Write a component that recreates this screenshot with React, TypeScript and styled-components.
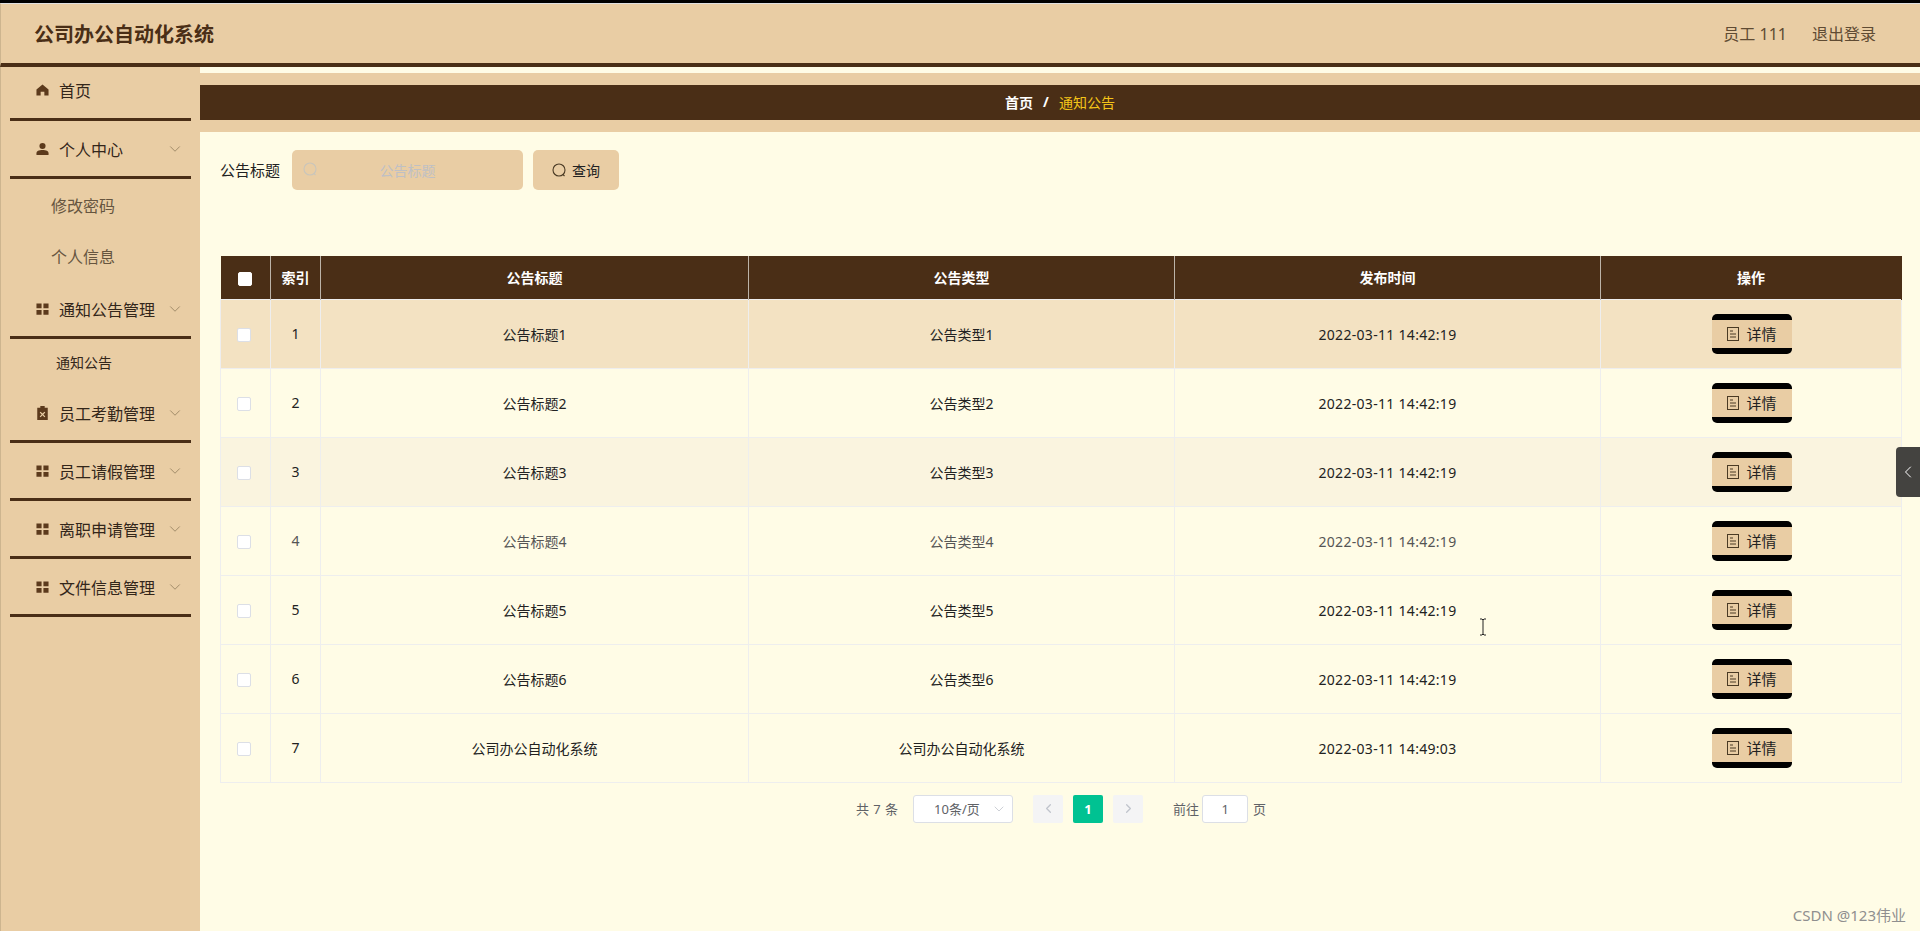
import { ChevronDown, ChevronLeft, ChevronRight } from "lucide-react";
import styled, { createGlobalStyle } from "styled-components";

const tan = "#e9cda4";
const brown = "#4a2e16";
const cream = "#fffce6";

const GlobalStyle = createGlobalStyle`
    html, body {
        margin: 0;
        padding: 0;
        background: ${cream};
        font-family: "Noto Sans", "Noto Sans CJK SC", sans-serif;
    }
    * { box-sizing: border-box; }
`;

const Page = styled.div`
    position: relative;
    height: 931px;
    overflow: hidden;
    display: flex;
    flex-direction: column;
    background: ${cream};
    border-top: 3px solid #000;
`;
const Header = styled.header`
    flex: none;
    height: 64px;
    display: flex;
    align-items: center;
    justify-content: space-between;
    padding: 0 44px 1px 33px;
    background: ${tan};
    border-top: 1px solid #e0e0e0;
    border-left: 1px solid #cdb58f;
    border-bottom: 4px solid ${brown};
`;
const Title = styled.div`
    font-size: 20px;
    font-weight: 700;
    color: ${brown};
`;
const UserBox = styled.div`
    display: flex;
    gap: 25px;
    font-size: 16px;
    color: #5f4b33;
`;
const Body = styled.div`
    flex: 1;
    display: flex;
    min-height: 0;
`;
const Sidebar = styled.aside`
    flex: none;
    width: 200px;
    background: ${tan};
    border-left: 1px solid #cdb58f;
`;
const MenuRow = styled.div<{ $first?: boolean }>`
    height: ${(p) => (p.$first ? 54 : 58)}px;
    margin: 0 9px;
    padding: 0 7px ${(p) => (p.$first ? 5 : 0)}px 26px;
    display: flex;
    align-items: center;
    gap: 10px;
    font-size: 16px;
    color: #33261a;
    white-space: nowrap;
    border-bottom: 3px solid ${brown};
    svg.lead {
        flex: none;
        width: 13px;
        height: 14px;
        fill: #5c3a1c;
    }
    span { flex: 1; }
`;
const SubRow = styled.div<{ $small?: boolean }>`
    height: ${(p) => (p.$small ? 46 : 51)}px;
    display: flex;
    align-items: center;
    padding-left: ${(p) => (p.$small ? 55 : 50)}px;
    font-size: ${(p) => (p.$small ? 14 : 16)}px;
    color: ${(p) => (p.$small ? "#33261a" : "#66553f")};
`;
const Main = styled.main`
    flex: 1;
    min-width: 0;
    padding-top: 6px;
`;
const CrumbBand = styled.div`
    padding: 12px 0;
    background: ${tan};
`;
const Crumbs = styled.div`
    height: 35px;
    display: flex;
    align-items: center;
    justify-content: center;
    gap: 10px;
    padding-bottom: 2px;
    background: ${brown};
    font-size: 14px;
    font-weight: 700;
    color: #fff;
`;
const CrumbCurrent = styled.span`
    color: #f5c518;
    font-weight: 400;
`;
const Content = styled.div`
    padding: 18px 19px 0 20px;
`;
const SearchBar = styled.div`
    display: flex;
    align-items: center;
    height: 40px;
    margin-bottom: 66px;
`;
const SearchLabel = styled.label`
    width: 72px;
    padding-bottom: 1px;
    font-size: 15px;
    color: #222;
`;
const SearchBox = styled.div`
    position: relative;
    width: 231px;
    height: 40px;
    display: flex;
    align-items: center;
    justify-content: center;
    background: ${tan};
    border-radius: 5px;
    font-size: 14px;
    color: #bfc0c4;
    svg {
        position: absolute;
        left: 11px;
        top: 12px;
    }
`;
const SearchButton = styled.button`
    width: 86px;
    height: 40px;
    margin-left: 10px;
    display: flex;
    align-items: center;
    justify-content: center;
    gap: 5px;
    background: ${tan};
    border: none;
    border-radius: 5px;
    font-family: inherit;
    font-size: 14px;
    color: #222;
`;
const Table = styled.table`
    width: 1681px;
    table-layout: fixed;
    border-collapse: collapse;
    font-size: 14px;
`;
const HeadCell = styled.th`
    height: 43px;
    padding: 0;
    background: ${brown};
    color: #fff;
    font-size: 14px;
    font-weight: 700;
    border-right: 1px solid #bcb3a8;
    &:last-child { border-right: 1px solid ${brown}; }
`;
const Row = styled.tr<{ $bg: string; $muted?: boolean }>`
    background: ${(p) => p.$bg};
    color: ${(p) => (p.$muted ? "#555" : "#222")};
`;
const Cell = styled.td`
    height: 69px;
    padding: 0;
    text-align: center;
    border: 1px solid #eeeeee;
`;
const TimeCell = styled(Cell)`
    padding-top: 1px;
    letter-spacing: 0.3px;
`;
const CheckBox = styled.span<{ $head?: boolean }>`
    display: inline-block;
    vertical-align: middle;
    width: 14px;
    height: 14px;
    margin-left: ${(p) => (p.$head ? 0 : -4)}px;
    background: #fff;
    border: 1px solid ${(p) => (p.$head ? "#fff" : "#dcdfe6")};
    border-radius: 2px;
`;
const DetailButton = styled.button`
    width: 80px;
    height: 40px;
    margin-left: 2px;
    display: inline-flex;
    align-items: center;
    justify-content: center;
    gap: 7px;
    vertical-align: middle;
    background: ${tan};
    border: none;
    border-top: 6px solid #000;
    border-bottom: 6px solid #000;
    border-radius: 5px;
    font-family: inherit;
    font-size: 15px;
    color: #222;
`;
const Pager = styled.div`
    display: flex;
    align-items: center;
    justify-content: center;
    margin-top: 12px;
    padding-left: 1px;
    height: 28px;
    font-size: 13px;
    word-spacing: 1px;
    color: #606266;
`;
const PageSize = styled.div`
    position: relative;
    width: 100px;
    height: 28px;
    margin: 0 20px 0 15px;
    padding-left: 20px;
    display: flex;
    align-items: center;
    background: #fff;
    border: 1px solid #dcdfe6;
    border-radius: 3px;
    svg {
        position: absolute;
        right: 5px;
        top: 5px;
        color: #c0c4cc;
    }
`;
const PageButton = styled.div<{ $active?: boolean }>`
    width: 30px;
    height: 28px;
    margin-right: 10px;
    display: flex;
    align-items: center;
    justify-content: center;
    background: ${(p) => (p.$active ? "#00c292" : "#f4f4f5")};
    color: ${(p) => (p.$active ? "#fff" : "#c0c4cc")};
    font-weight: 700;
    border-radius: 2px;
`;
const JumpBox = styled.div`
    width: 46px;
    height: 28px;
    margin: 0 5px 0 3px;
    display: flex;
    align-items: center;
    justify-content: center;
    background: #fff;
    border: 1px solid #dcdfe6;
    border-radius: 3px;
`;
const JumpLabel = styled.span`
    margin-left: 20px;
`;
const SideTab = styled.div`
    position: absolute;
    right: 0;
    top: 444px;
    width: 24px;
    height: 50px;
    display: flex;
    align-items: center;
    justify-content: center;
    background: #444340;
    border-radius: 4px 0 0 4px;
    color: #fff;
`;
const Watermark = styled.div`
    position: absolute;
    right: 14px;
    top: 901px;
    font-size: 15px;
    color: #8f8f8f;
`;
const TextCursor = styled.svg`
    position: absolute;
    left: 1478px;
    top: 615px;
`;

const HomeIcon = () => (
    <svg className="lead" viewBox="0 0 14 14">
        <path d="M7 1 L13.5 6.5 V13 H9 V9 H5 V13 H.5 V6.5 Z" />
    </svg>
);
const UserIcon = () => (
    <svg className="lead" viewBox="0 0 14 14">
        <circle cx="7" cy="3.8" r="3.3" />
        <path d="M.5 13.5 V11.5 C.5 9 3 8 7 8 S13.5 9 13.5 11.5 V13.5 Z" />
    </svg>
);
const GridIcon = () => (
    <svg className="lead" viewBox="0 0 14 14">
        <path d="M.5 1 H6 V6.3 H.5 Z M8 1 H13.5 V6.3 H8 Z M.5 8 H6 V13.3 H.5 Z M8 8 H13.5 V13.3 H8 Z" />
    </svg>
);
const ClipboardIcon = () => (
    <svg className="lead" viewBox="0 0 14 16">
        <path
            fillRule="evenodd"
            d="M4.5 0 H9.5 V2 H13 V16 H1 V2 H4.5 Z M4.8 6.5 L3.8 7.5 L6 9.7 L3.8 11.9 L4.8 12.9 L7 10.7 L9.2 12.9 L10.2 11.9 L8 9.7 L10.2 7.5 L9.2 6.5 L7 8.7 Z"
        />
    </svg>
);
const SearchIcon = ({ color }: { color: string }) => (
    <svg width="15" height="15" viewBox="0 0 15 15" fill="none" stroke={color} strokeWidth="1.1">
        <circle cx="7" cy="7" r="6" />
        <path d="M11 11.5 L12.5 13" />
    </svg>
);
const TicketIcon = () => (
    <svg width="12" height="14" viewBox="0 0 12 14" fill="none" stroke="#4a3a24" strokeWidth="1">
        <rect x=".5" y=".5" width="11" height="13" />
        <path d="M3 4 H6 M3 7 H9 M3 10 H9" />
    </svg>
);
const Chevron = () => <ChevronDown size={18} strokeWidth={1} color="#8a7656" />;

const rows = [
    { title: "公告标题1", type: "公告类型1", time: "2022-03-11 14:42:19", bg: "#f3e2c2" },
    { title: "公告标题2", type: "公告类型2", time: "2022-03-11 14:42:19", bg: cream },
    { title: "公告标题3", type: "公告类型3", time: "2022-03-11 14:42:19", bg: "#faf4df" },
    { title: "公告标题4", type: "公告类型4", time: "2022-03-11 14:42:19", bg: cream, muted: true },
    { title: "公告标题5", type: "公告类型5", time: "2022-03-11 14:42:19", bg: cream },
    { title: "公告标题6", type: "公告类型6", time: "2022-03-11 14:42:19", bg: cream },
    { title: "公司办公自动化系统", type: "公司办公自动化系统", time: "2022-03-11 14:49:03", bg: cream },
];

export default function App() {
    return (
        <Page>
            <GlobalStyle />
            <Header>
                <Title>公司办公自动化系统</Title>
                <UserBox>
                    <span>员工 111</span>
                    <span>退出登录</span>
                </UserBox>
            </Header>
            <Body>
                <Sidebar>
                    <MenuRow $first>
                        <HomeIcon />
                        <span>首页</span>
                    </MenuRow>
                    <MenuRow>
                        <UserIcon />
                        <span>个人中心</span>
                        <Chevron />
                    </MenuRow>
                    <SubRow>修改密码</SubRow>
                    <SubRow>个人信息</SubRow>
                    <MenuRow>
                        <GridIcon />
                        <span>通知公告管理</span>
                        <Chevron />
                    </MenuRow>
                    <SubRow $small>通知公告</SubRow>
                    <MenuRow>
                        <ClipboardIcon />
                        <span>员工考勤管理</span>
                        <Chevron />
                    </MenuRow>
                    <MenuRow>
                        <GridIcon />
                        <span>员工请假管理</span>
                        <Chevron />
                    </MenuRow>
                    <MenuRow>
                        <GridIcon />
                        <span>离职申请管理</span>
                        <Chevron />
                    </MenuRow>
                    <MenuRow>
                        <GridIcon />
                        <span>文件信息管理</span>
                        <Chevron />
                    </MenuRow>
                </Sidebar>
                <Main>
                    <CrumbBand>
                        <Crumbs>
                            <span>首页</span>
                            <span>/</span>
                            <CrumbCurrent>通知公告</CrumbCurrent>
                        </Crumbs>
                    </CrumbBand>
                    <Content>
                        <SearchBar>
                            <SearchLabel>公告标题</SearchLabel>
                            <SearchBox>
                                <SearchIcon color="#c9c5bb" />
                                公告标题
                            </SearchBox>
                            <SearchButton>
                                <SearchIcon color="#4a3a24" />
                                查询
                            </SearchButton>
                        </SearchBar>
                        <Table>
                            <colgroup>
                                <col width={50} />
                                <col width={50} />
                                <col width={428} />
                                <col width={426} />
                                <col width={426} />
                                <col width={301} />
                            </colgroup>
                            <thead>
                                <tr>
                                    <HeadCell>
                                        <CheckBox $head />
                                    </HeadCell>
                                    <HeadCell>索引</HeadCell>
                                    <HeadCell>公告标题</HeadCell>
                                    <HeadCell>公告类型</HeadCell>
                                    <HeadCell>发布时间</HeadCell>
                                    <HeadCell>操作</HeadCell>
                                </tr>
                            </thead>
                            <tbody>
                                {rows.map((row, index) => (
                                    <Row key={index} $bg={row.bg} $muted={row.muted}>
                                        <Cell>
                                            <CheckBox />
                                        </Cell>
                                        <Cell>{index + 1}</Cell>
                                        <Cell>{row.title}</Cell>
                                        <Cell>{row.type}</Cell>
                                        <TimeCell>{row.time}</TimeCell>
                                        <Cell>
                                            <DetailButton>
                                                <TicketIcon />
                                                详情
                                            </DetailButton>
                                        </Cell>
                                    </Row>
                                ))}
                            </tbody>
                        </Table>
                        <Pager>
                            <span>共 7 条</span>
                            <PageSize>
                                10条/页
                                <ChevronDown size={16} strokeWidth={1.2} />
                            </PageSize>
                            <PageButton>
                                <ChevronLeft size={15} />
                            </PageButton>
                            <PageButton $active>1</PageButton>
                            <PageButton>
                                <ChevronRight size={15} />
                            </PageButton>
                            <JumpLabel>前往</JumpLabel>
                            <JumpBox>1</JumpBox>
                            <span>页</span>
                        </Pager>
                    </Content>
                </Main>
            </Body>
            <SideTab>
                <ChevronLeft size={20} strokeWidth={1.2} />
            </SideTab>
            <TextCursor width="10" height="18" viewBox="0 0 10 18" fill="none" stroke="#222" strokeWidth="1">
                <path d="M2 1 H4 L5 2 L6 1 H8 M5 2 V16 M2 17 H4 L5 16 L6 17 H8" />
            </TextCursor>
            <Watermark>CSDN @123伟业</Watermark>
        </Page>
    );
}
